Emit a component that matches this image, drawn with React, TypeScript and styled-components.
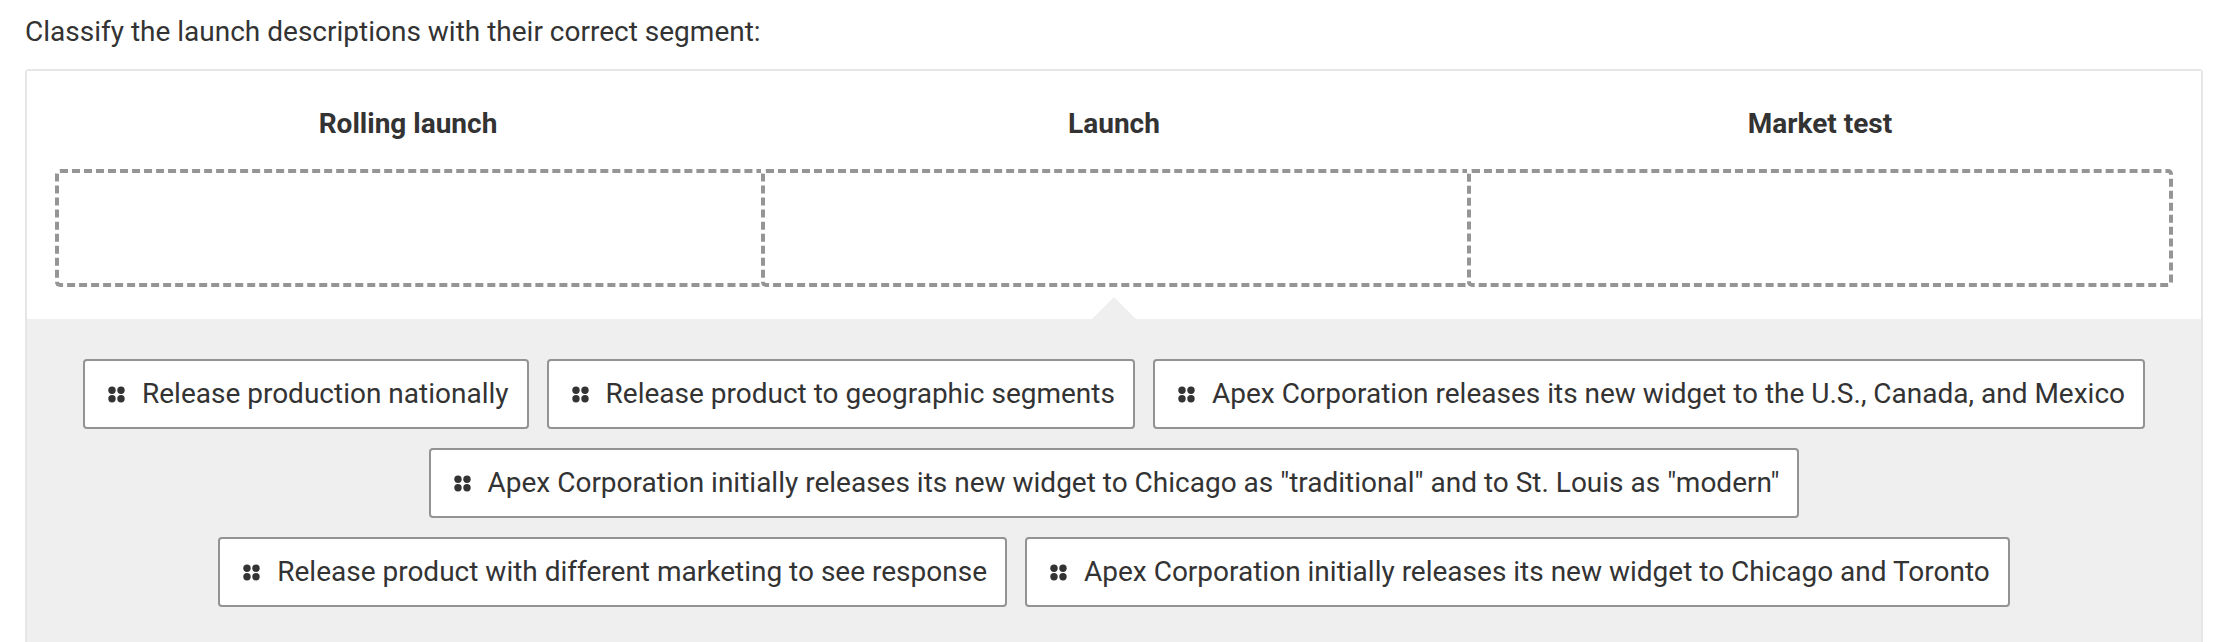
import styled, { createGlobalStyle } from 'styled-components';

const GlobalStyle = createGlobalStyle`
  body {
    margin: 0;
    background: #fff;
    font-family: Roboto, 'Liberation Sans', sans-serif;
    color: #333;
  }
`;

const Page = styled.div`
  padding: 11px 11px 0 25px;
`;

const Prompt = styled.div`
  font-size: 28px;
  line-height: 42px;
  margin-bottom: 16px;
  color: #333;
`;

const Panel = styled.div`
  width: 2178px;
  box-sizing: border-box;
  border: 2px solid #e6e6e6;
  border-bottom: none;
  border-radius: 4px 4px 0 0;
`;

const Categories = styled.div`
  display: grid;
  grid-template-columns: repeat(3, 1fr);
  padding: 32px 28px;
  background: #fff;
`;

const Category = styled.div`
  display: flex;
  flex-direction: column;
  min-width: 0;
`;

const CategoryTitle = styled.div`
  font-size: 28px;
  line-height: 42px;
  font-weight: 700;
  text-align: center;
  color: #333;
  margin-bottom: 24px;
`;

const DropZone = styled.div<{ $last?: boolean }>`
  height: 118px;
  box-sizing: border-box;
  border: 4px dashed #959595;
  border-right-style: ${(p) => (p.$last ? 'dashed' : 'none')};
  border-radius: ${(p) => (p.$last ? '5px' : '5px 0 0 5px')};
`;

const Bank = styled.div`
  position: relative;
  background: #efefef;
  padding: 40px;
  display: flex;
  flex-wrap: wrap;
  justify-content: center;
  row-gap: 19px;
  column-gap: 18px;

  &::before {
    content: '';
    position: absolute;
    top: -22px;
    left: 50%;
    margin-left: -22px;
    border-left: 22px solid transparent;
    border-right: 22px solid transparent;
    border-bottom: 22px solid #efefef;
  }
`;

const Chip = styled.div`
  display: flex;
  align-items: center;
  box-sizing: border-box;
  height: 70px;
  padding: 12px 18px 12px 23px;
  background: #fff;
  border: 2px solid #939393;
  border-radius: 4px;
  font-size: 28px;
  line-height: 42px;
  color: #333;
  white-space: nowrap;
`;

const Grip = styled.svg`
  width: 17px;
  height: 17px;
  margin-right: 17px;
  flex-shrink: 0;
`;

const GripIcon = () => (
  <Grip viewBox="0 0 17 17">
    <circle cx="4" cy="4.2" r="3.7" fill="#333" />
    <circle cx="13" cy="4.2" r="3.7" fill="#333" />
    <circle cx="4" cy="12.8" r="3.7" fill="#333" />
    <circle cx="13" cy="12.8" r="3.7" fill="#333" />
  </Grip>
);

const categories = ['Rolling launch', 'Launch', 'Market test'];

const items = [
  'Release production nationally',
  'Release product to geographic segments',
  'Apex Corporation releases its new widget to the U.S., Canada, and Mexico',
  'Apex Corporation initially releases its new widget to Chicago as "traditional" and to St. Louis as "modern"',
  'Release product with different marketing to see response',
  'Apex Corporation initially releases its new widget to Chicago and Toronto',
];

export default function App() {
  return (
    <>
      <GlobalStyle />
      <Page>
        <Prompt>Classify the launch descriptions with their correct segment:</Prompt>
        <Panel>
          <Categories>
            {categories.map((name, index) => (
              <Category key={name}>
                <CategoryTitle>{name}</CategoryTitle>
                <DropZone $last={index === categories.length - 1} />
              </Category>
            ))}
          </Categories>
          <Bank>
            {items.map((text) => (
              <Chip key={text}>
                <GripIcon />
                {text}
              </Chip>
            ))}
          </Bank>
        </Panel>
      </Page>
    </>
  );
}
